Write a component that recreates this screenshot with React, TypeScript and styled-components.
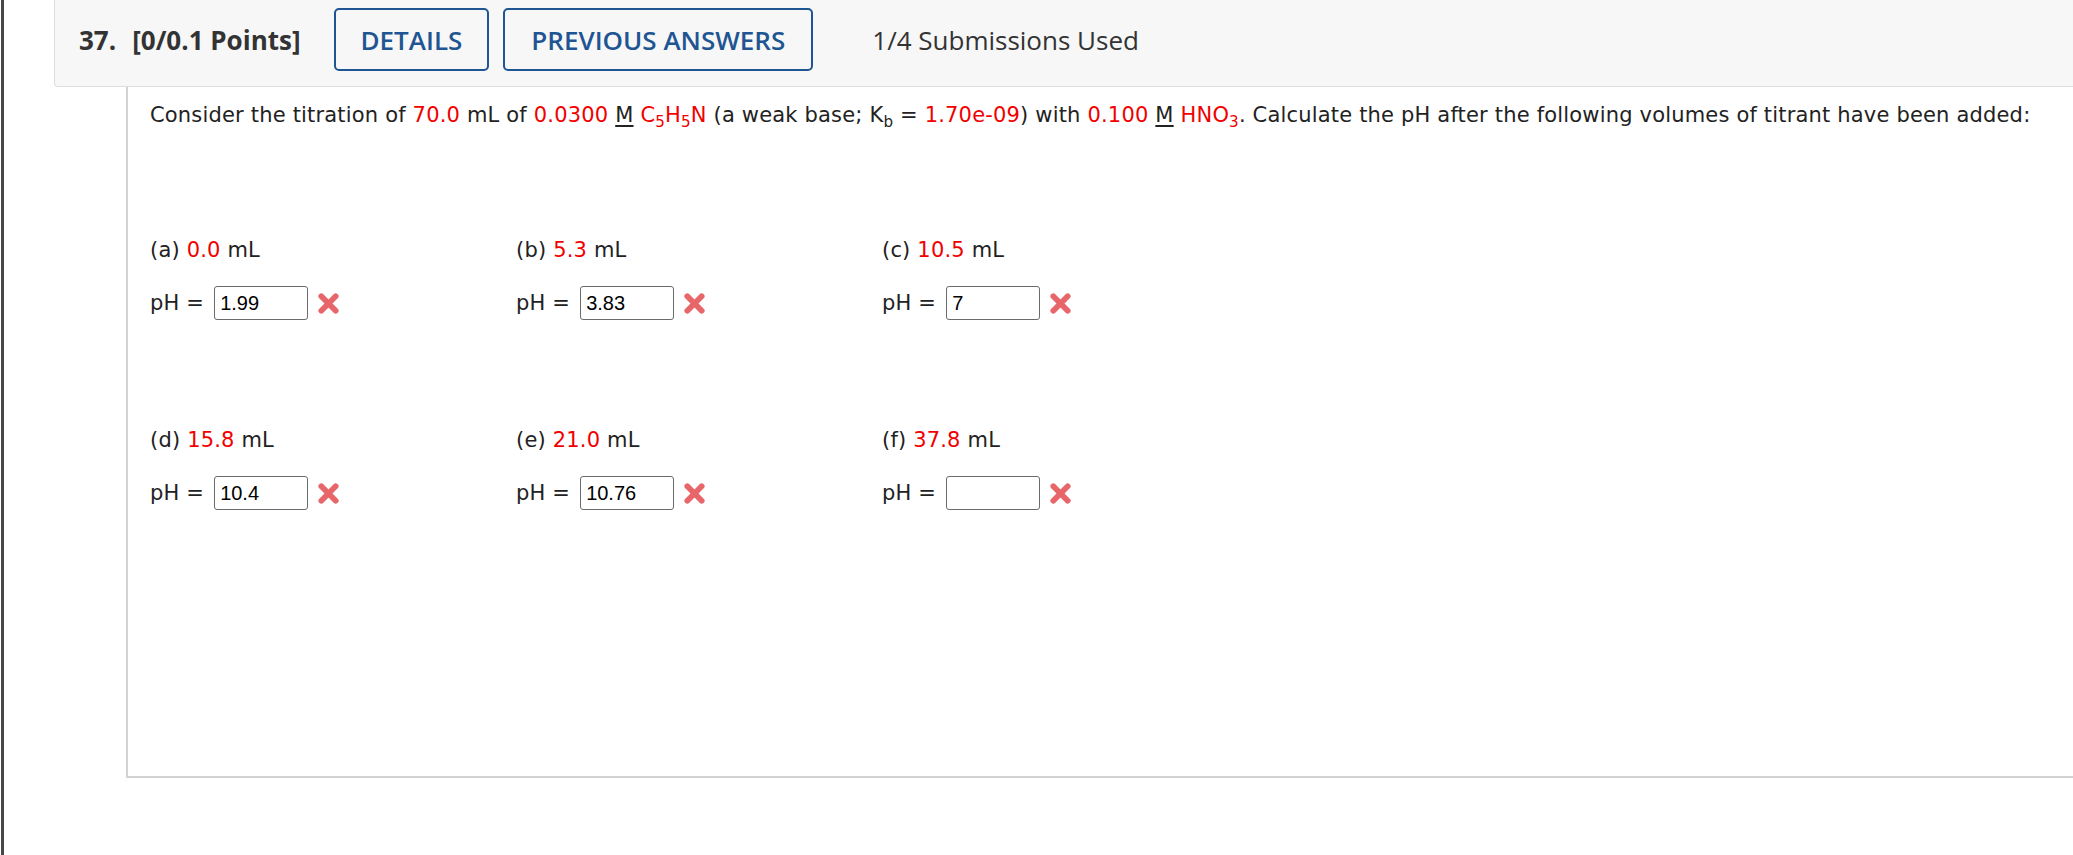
import React from "react";
import styled, { createGlobalStyle } from "styled-components";

const Global = createGlobalStyle`
  html, body { margin: 0; padding: 0; background: #fff; }
  body { font-family: "DejaVu Sans", Verdana, sans-serif; overflow: hidden; }
`;

const Page = styled.div`
  margin-left: 1px;
  border-left: 3px solid #474747;
  min-height: 855px;
  box-sizing: border-box;
`;

const Header = styled.div`
  margin-left: 50px;
  height: 87px;
  box-sizing: border-box;
  background: #f7f7f7;
  border-left: 1px solid #dedede;
  border-bottom: 1px solid #dedede;
  border-bottom-left-radius: 4px;
  padding: 8px 0 0 24px;
  display: flex;
  align-items: flex-start;
  font-family: "Open Sans", sans-serif;
  font-size: 26px;
  color: #333;
`;

const HeaderRow = styled.div`
  height: 63px;
  display: flex;
  align-items: center;
`;

const Number = styled.span`
  font-weight: 700;
  margin-right: 16px;
`;

const Points = styled.span`
  font-weight: 700;
  margin-right: 33px;
`;

const HeadButton = styled.button<{ $gap?: number; $pad?: number }>`
  height: 63px;
  box-sizing: border-box;
  padding: 0 ${(p) => p.$pad ?? 25}px;
  margin-right: ${(p) => p.$gap ?? 0}px;
  border: 2px solid #1e5592;
  border-radius: 5px;
  background: transparent;
  color: #1e5592;
  font-family: "Open Sans", sans-serif;
  font-size: 26px;
  font-weight: 600;
  letter-spacing: 0;
  cursor: pointer;
`;

const Subs = styled.span`
  font-weight: 400;
`;

const Content = styled.div`
  margin-left: 122px;
  height: 691px;
  box-sizing: border-box;
  border-left: 2px solid #d3d3d3;
  border-bottom: 2px solid #d3d3d3;
  padding: 14px 0 0 22px;
  color: #222;
  font-size: 21px;
  letter-spacing: 0.18px;
`;

const Question = styled.p`
  margin: 0;
  line-height: 29px;
  white-space: nowrap;
`;

const Red = styled.span`
  color: #f20000;
`;

const Molar = styled.span`
  text-decoration: underline;
  text-underline-offset: 3px;
`;

const Sub = styled.sub`
  font-size: 0.72em;
  vertical-align: -0.3em;
  line-height: 0;
`;

const Grid = styled.div`
  margin-top: 105px;
  display: grid;
  grid-template-columns: repeat(3, 366px);
  row-gap: 105px;
`;

const Cell = styled.div`
  display: flex;
  flex-direction: column;
  gap: 21px;
`;

const Label = styled.div`
  line-height: 30px;
`;

const AnswerRow = styled.div`
  display: flex;
  align-items: center;
  height: 34px;
`;

const Field = styled.input`
  margin-left: 10px;
  width: 94px;
  height: 34px;
  box-sizing: border-box;
  border: 1px solid #6b6b6b;
  border-radius: 3px;
  padding: 0 0 0 5px;
  font-family: "Liberation Sans", Arial, sans-serif;
  font-size: 20px;
  letter-spacing: 0;
  color: #000;
  background: #fff;
  outline: none;
`;

const Wrong = styled.svg`
  margin-left: 9px;
  width: 23px;
  height: 23px;
  flex: none;
`;

const CrossIcon = () => (
  <Wrong viewBox="0 0 24 24">
    <g stroke="#e65a5e" strokeWidth="6" strokeLinecap="round" opacity="0.92">
      <line x1="4.5" y1="4.5" x2="19.5" y2="19.5" />
      <line x1="19.5" y1="4.5" x2="4.5" y2="19.5" />
    </g>
  </Wrong>
);

const parts = [
  { id: "a", vol: "0.0", val: "1.99" },
  { id: "b", vol: "5.3", val: "3.83" },
  { id: "c", vol: "10.5", val: "7" },
  { id: "d", vol: "15.8", val: "10.4" },
  { id: "e", vol: "21.0", val: "10.76" },
  { id: "f", vol: "37.8", val: "" },
];

export default function App() {
  return (
    <>
      <Global />
      <Page>
        <Header>
          <HeaderRow>
            <Number>37.</Number>
            <Points>[0/0.1 Points]</Points>
            <HeadButton $gap={14}>DETAILS</HeadButton>
            <HeadButton $gap={59} $pad={26}>
              PREVIOUS ANSWERS
            </HeadButton>
            <Subs>1/4 Submissions Used</Subs>
          </HeaderRow>
        </Header>
        <Content>
          <Question>
            Consider the titration of <Red>70.0</Red> mL of <Red>0.0300</Red>{" "}
            <Molar>M</Molar>{" "}
            <Red>
              C<Sub>5</Sub>H<Sub>5</Sub>N
            </Red>{" "}
            (a weak base; K<Sub>b</Sub> = <Red>1.70e-09</Red>) with{" "}
            <Red>0.100</Red> <Molar>M</Molar>{" "}
            <Red>
              HNO<Sub>3</Sub>
            </Red>
            . Calculate the pH after the following volumes of titrant have been
            added:
          </Question>
          <Grid>
            {parts.map((p) => (
              <Cell key={p.id}>
                <Label>
                  ({p.id}) <Red>{p.vol}</Red> mL
                </Label>
                <AnswerRow>
                  pH =
                  <Field readOnly value={p.val} />
                  <CrossIcon />
                </AnswerRow>
              </Cell>
            ))}
          </Grid>
        </Content>
      </Page>
    </>
  );
}
